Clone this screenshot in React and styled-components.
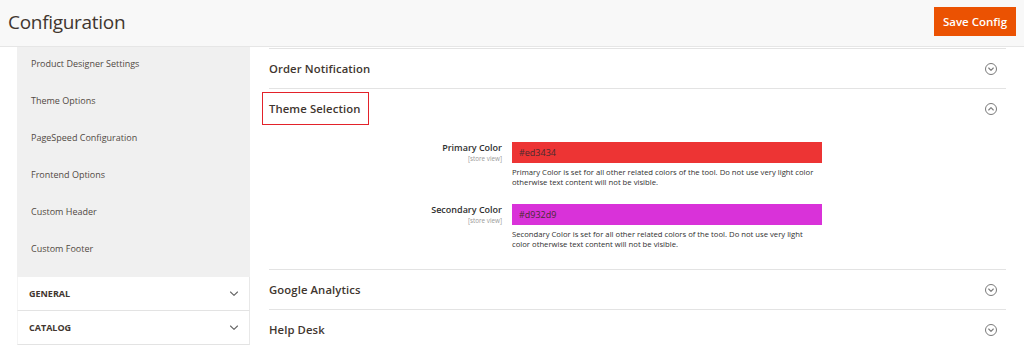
import React from 'react';
import styled, { createGlobalStyle } from 'styled-components';

const Global = createGlobalStyle`
	html, body {
		margin: 0;
		padding: 0;
		background: #fff;
	}
	body {
		width: 1024px;
		height: 352px;
		overflow: hidden;
		font-family: "Open Sans", "Noto Sans", sans-serif;
		color: #41362f;
	}
`

const Header = styled.header`
	height: 46px;
	background: #f8f8f8;
	border-bottom: 1px solid #e6e6e6;
	display: flex;
	align-items: center;
	justify-content: space-between;
	padding: 0 8px;
	h1 {
		margin: -3px 0 0;
		font-size: 19px;
		font-weight: 400;
		color: #41362f;
		letter-spacing: -0.3px;
	}
`

const SaveButton = styled.button`
	height: 29px;
	width: 82px;
	margin-top: -3px;
	border: 0;
	background: #eb5202;
	color: #fff;
	font-family: inherit;
	font-size: 11.5px;
	font-weight: 600;
	padding: 0;
`

const Body = styled.div`
	display: flex;
	padding-left: 17px;
`

const Sidebar = styled.aside`
	width: 233px;
	flex-shrink: 0;
`

const SubNav = styled.ul`
	list-style: none;
	margin: 0;
	padding: 0 0 8px;
	background: #f0f0f0;
`

const SubItem = styled.li`
	height: 37px;
	box-sizing: border-box;
	padding: 0 0 4px 14px;
	display: flex;
	align-items: center;
	font-size: 9px;
	color: #514943;
`

const Group = styled.div`
	height: 33px;
	display: flex;
	align-items: center;
	justify-content: space-between;
	padding: 0 10px 0 11px;
	border-right: 1px solid #e8e8e8;
	border-left: 1px solid #f4f4f4;
	border-bottom: 1px solid #e3e3e3;
	font-size: 9px;
	font-weight: 700;
	text-transform: uppercase;
	color: #41362f;
`

const Main = styled.main`
	width: 737px;
	margin-left: 19px;
	padding-top: 1px;
`

const Section = styled.section`
	border-top: 1px solid #e3e3e3;
	padding-bottom: ${p => p.open ? '20px' : '0'};
`

const SectionHead = styled.div`
	height: 39px;
	display: flex;
	align-items: center;
	justify-content: space-between;
	padding-right: 8px;
`

const Title = styled.h2`
	margin: 0;
	font-size: 11.3px;
	line-height: 15px;
	font-weight: 600;
	color: #41362f;
	letter-spacing: 0.1px;
	${p => p.marked && `
		outline: 1.5px solid #e3222a;
		margin-left: -6px;
		padding: 8px 8px 8px 6px;
	`}
`

const Field = styled.div`
	display: grid;
	grid-template-columns: 233px 310px;
	column-gap: 10px;
	margin-top: ${p => p.first ? '14px' : '17px'};
`

const Label = styled.div`
	text-align: right;
	strong {
		display: block;
		font-size: 9px;
		font-weight: 600;
		color: #303030;
		line-height: 12px;
	}
	span {
		display: block;
		font-size: 6.3px;
		color: #999;
		line-height: 9px;
	}
`

const ColorInput = styled.div`
	height: 21px;
	background: ${p => p.color};
	display: flex;
	align-items: center;
	padding-left: 7px;
	font-size: 9px;
	color: #4a2a30;
`

const Note = styled.p`
	margin: 4px 0 0;
	width: 330px;
	font-size: 7.7px;
	line-height: 10px;
	color: #303030;
`

const CircleChevron = ({ up }) => (
	<svg width="14" height="14" viewBox="0 0 14 14" fill="none">
		<circle cx="7" cy="7" r="5.5" stroke="#7a7a7a" strokeWidth="1" />
		<path d={up ? 'M4.7 8 L7 5.7 L9.3 8' : 'M4.7 6 L7 8.3 L9.3 6'} stroke="#7a7a7a" strokeWidth="1.1" strokeLinecap="round" strokeLinejoin="round" />
	</svg>
)

const Chevron = () => (
	<svg width="10" height="6" viewBox="0 0 10 6" fill="none">
		<path d="M1.5 1 L5 4.3 L8.5 1" stroke="#666" strokeWidth="1.1" strokeLinecap="round" strokeLinejoin="round" />
	</svg>
)

const subItems = [
	'Product Designer Settings',
	'Theme Options',
	'PageSpeed Configuration',
	'Frontend Options',
	'Custom Header',
	'Custom Footer'
]

const fields = [
	{ name: 'Primary Color', value: '#ed3434', note: ['Primary Color is set for all other related colors of the tool. Do not use very light color', 'otherwise text content will not be visible.'] },
	{ name: 'Secondary Color', value: '#d932d9', note: ['Secondary Color is set for all other related colors of the tool. Do not use very light', 'color otherwise text content will not be visible.'] }
]

export default function App() {
	return (
		<>
			<Global />
			<Header>
				<h1>Configuration</h1>
				<SaveButton>Save Config</SaveButton>
			</Header>
			<Body>
				<Sidebar>
					<SubNav>
						{subItems.map(s => <SubItem key={s}>{s}</SubItem>)}
					</SubNav>
					<Group>General <Chevron /></Group>
					<Group>Catalog <Chevron /></Group>
				</Sidebar>
				<Main>
					<Section>
						<SectionHead>
							<Title>Order Notification</Title>
							<CircleChevron />
						</SectionHead>
					</Section>
					<Section open>
						<SectionHead>
							<Title marked>Theme Selection</Title>
							<CircleChevron up />
						</SectionHead>
						{fields.map((f, i) => (
							<Field key={f.name} first={i === 0}>
								<Label>
									<strong>{f.name}</strong>
									<span>[store view]</span>
								</Label>
								<div>
									<ColorInput color={f.value}>{f.value}</ColorInput>
									<Note>{f.note[0]}<br />{f.note[1]}</Note>
								</div>
							</Field>
						))}
					</Section>
					<Section>
						<SectionHead>
							<Title>Google Analytics</Title>
							<CircleChevron />
						</SectionHead>
					</Section>
					<Section>
						<SectionHead>
							<Title>Help Desk</Title>
							<CircleChevron />
						</SectionHead>
					</Section>
				</Main>
			</Body>
		</>
	);
}
